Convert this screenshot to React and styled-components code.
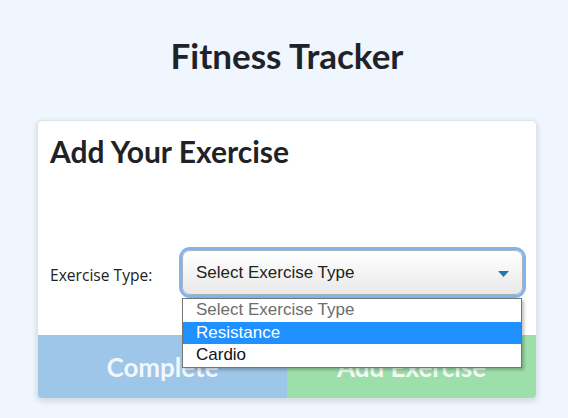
import styled, { createGlobalStyle } from 'styled-components';

const GlobalStyle = createGlobalStyle`
    body {
        margin: 0;
        background-color: #f0f6fe;
        font-family: 'Lato', 'Open Sans', sans-serif;
        color: #222222;
    }
`

const Page = styled.div`
    padding: 34px 0 0 6px;
    min-height: 418px;
    box-sizing: border-box;
`

const Title = styled.h1`
    margin: 0;
    text-align: center;
    font-size: 35px;
    font-weight: 700;
    line-height: 42px;
    color: #1f2328;
`

const Card = styled.section`
    width: 500px;
    margin: 44px auto 0;
    background-color: #ffffff;
    border: 1px solid #dde3ea;
    border-radius: 5px;
    box-shadow: 0px 2px 6px rgba(0, 0, 0, 0.14);
    box-sizing: border-box;
`

const CardTitle = styled.h2`
    margin: 12px 0 0;
    padding: 0 12px;
    font-size: 30px;
    font-weight: 700;
    line-height: 36px;
    color: #1f2328;
`

const FormRow = styled.div`
    display: grid;
    grid-template-columns: 132px 341px;
    align-items: center;
    padding-left: 12px;
    margin-top: 81px;
`

const Label = styled.label`
    font-family: 'Open Sans', sans-serif;
    font-size: 15.6px;
    color: #222222;
    padding-top: 4px;
`

const SelectWrap = styled.div`
    position: relative;
`

const SelectBox = styled.div`
    height: 45px;
    display: flex;
    align-items: center;
    justify-content: space-between;
    padding: 0 13px;
    box-sizing: border-box;
    border: 1px solid #a9b3bd;
    border-radius: 8px;
    background: linear-gradient(#ffffff, #e9e9e9);
    box-shadow: 0 0 0 3px #7fb5ec;
    font-family: 'Liberation Sans', Arial, sans-serif;
    font-size: 17px;
    color: #222222;
`

const Caret = styled.svg`
    width: 11px;
    height: 6px;
    margin-top: 3px;
`

const OptionList = styled.ul`
    position: absolute;
    top: 48px;
    left: 0;
    right: 1px;
    margin: 0;
    padding: 0;
    list-style: none;
    background-color: #ffffff;
    border: 1px solid #767676;
    box-shadow: 2px 2px 3px rgba(0, 0, 0, 0.25);
    z-index: 2;
`

const Option = styled.li`
    height: 22.5px;
    line-height: 22px;
    padding-left: 13px;
    font-family: 'Liberation Sans', Arial, sans-serif;
    font-size: 17px;
    color: ${props => props.selected ? '#ffffff' : props.muted ? '#6d6d6d' : '#111111'};
    background-color: ${props => props.selected ? '#1e90ff' : 'transparent'};
`

const ButtonRow = styled.div`
    display: grid;
    grid-template-columns: 1fr 1fr;
    margin-top: 40px;
`

const ActionButton = styled.button`
    height: 63px;
    border: none;
    background-color: ${props => props.color};
    border-radius: ${props => props.side === 'left' ? '0 0 0 4px' : '0 0 4px 0'};
    font-family: 'Lato', sans-serif;
    font-size: 26px;
    font-weight: 700;
    color: rgba(255, 255, 255, 0.88);
    padding: 0;
    cursor: pointer;
`

const options = [
    { label: 'Select Exercise Type', muted: true },
    { label: 'Resistance', selected: true },
    { label: 'Cardio' },
]

const App = () => {
    return (
        <Page>
            <GlobalStyle />
            <Title>Fitness Tracker</Title>
            <Card>
                <CardTitle>Add Your Exercise</CardTitle>
                <FormRow>
                    <Label>Exercise Type:</Label>
                    <SelectWrap>
                        <SelectBox>
                            <span>Select Exercise Type</span>
                            <Caret viewBox="0 0 11 6">
                                <path d="M0 0 L11 0 L5.5 6 Z" fill="#1a7bb3" />
                            </Caret>
                        </SelectBox>
                        <OptionList>
                            {options.map((opt, index) => (
                                <Option key={index} muted={opt.muted} selected={opt.selected}>
                                    {opt.label}
                                </Option>
                            ))}
                        </OptionList>
                    </SelectWrap>
                </FormRow>
                <ButtonRow>
                    <ActionButton side="left" color="#9dc6e8">Complete</ActionButton>
                    <ActionButton side="right" color="#9ddfab">Add Exercise</ActionButton>
                </ButtonRow>
            </Card>
        </Page>
    )
}

export default App;
